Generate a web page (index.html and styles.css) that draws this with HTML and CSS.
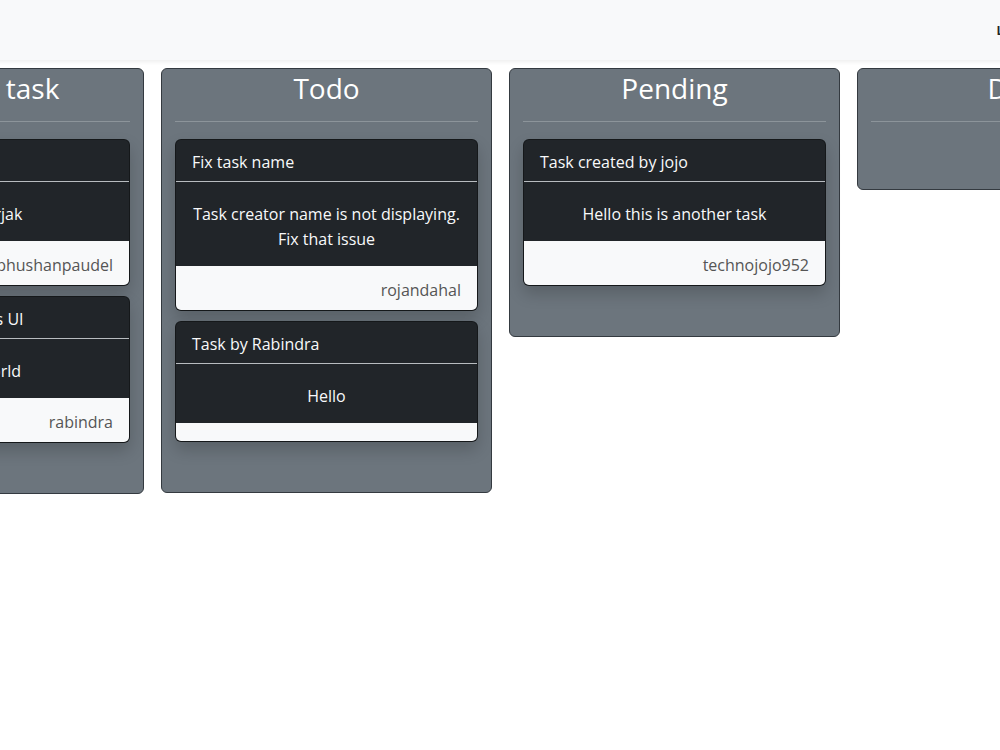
FILE: index.html
```html
<!DOCTYPE html>
<html lang="en">
<head>
  <meta charset="UTF-8" />
  <title>Kanban Board</title>
  <link rel="stylesheet" href="styles.css">
</head>
<body>
  <div class="page">
    <nav class="navbar">
      <a class="brand" href="#">Kanban</a>
      <a class="nav-link" href="#">Logout</a>
    </nav>

    <!-- board columns -->
    <div class="board">
      <section class="column">
        <h2 class="column-title">Backlog task</h2>
        <hr>
        <div class="task-list">
          <div class="task">
            <div class="task-header">First task</div>
            <div class="task-body">Meet Sarjak</div>
            <div class="task-footer">bibhushanpaudel</div>
          </div>
          <div class="task">
            <div class="task-header">Update kanban cards UI</div>
            <div class="task-body">Hello world</div>
            <div class="task-footer">rabindra</div>
          </div>
        </div>
      </section>

      <section class="column">
        <h2 class="column-title">Todo</h2>
        <hr>
        <div class="task-list">
          <div class="task">
            <div class="task-header">Fix task name</div>
            <div class="task-body">Task creator name is not displaying. Fix that issue</div>
            <div class="task-footer">rojandahal</div>
          </div>
          <div class="task">
            <div class="task-header">Task by Rabindra</div>
            <div class="task-body">Hello</div>
            <div class="task-footer"></div>
          </div>
        </div>
      </section>

      <section class="column">
        <h2 class="column-title">Pending</h2>
        <hr>
        <div class="task-list">
          <div class="task">
            <div class="task-header">Task created by jojo</div>
            <div class="task-body">Hello this is another task</div>
            <div class="task-footer">technojojo952</div>
          </div>
        </div>
      </section>

      <section class="column">
        <h2 class="column-title">Done</h2>
        <hr>
        <div class="task-list"></div>
      </section>
    </div>
  </div>
</body>
</html>
```

FILE: styles.css
```css
body {
  margin: 0;
  font-family: 'Segoe UI', 'Open Sans', 'Noto Sans', sans-serif;
  font-size: 16px;
  color: #212529;
  background: #fff;
  overflow: hidden;
}

/* the page is scrolled sideways in the shot */
.page {
  width: 1400px;
  margin-left: -199px;
}

.navbar {
  height: 60px;
  background: #f8f9fa;
  box-shadow: 0 2px 4px rgba(0,0,0,0.07);
  display: flex;
  align-items: center;
  justify-content: space-between;
  padding: 0 163px 0 16px;
  position: relative;
}
.brand {
  font-size: 20px;
  color: #212529;
  text-decoration: none;
}
.nav-link {
  font-size: 12px;
  font-weight: 700;
  color: #212529;
  text-decoration: none;
}

.board {
  display: flex;
  align-items: flex-start;
  gap: 17px;
  padding: 8px 12px;
}

.column {
  width: 331px;
  box-sizing: border-box;
  flex-shrink: 0;
  background: #6c757d;
  border: 1px solid #343a40;
  border-radius: 6px;
  padding: 2px 13px 50px;
}
.column-title {
  margin: 0;
  font-size: 28px;
  font-weight: 400;
  line-height: 34px;
  color: #fff;
  text-align: center;
}
.column hr {
  margin: 16px 0 17px;
  border: none;
  border-top: 1px solid #8c949a;
}

.task-list {
  display: flex;
  flex-direction: column;
  gap: 10px;
}
.task {
  background: #212529;
  border: 1px solid rgba(0,0,0,0.35);
  border-radius: 6px;
  overflow: hidden;
  box-shadow: 0 8px 16px rgba(0,0,0,0.18);
}
.task-header {
  padding: 10px 16px 6px;
  line-height: 25px;
  color: #f8f9fa;
  border-bottom: 1px solid #b8bcc0;
}
.task-body {
  padding: 20px 16px 14px;
  line-height: 25px;
  color: #f8f9fa;
  text-align: center;
}
.task-footer {
  background: #f8f9fa;
  padding: 11px 16px 7px;
  line-height: 26px;
  color: #555;
  text-align: right;
}
.task-footer:empty {
  padding: 9px 16px;
  line-height: 0;
}
```
